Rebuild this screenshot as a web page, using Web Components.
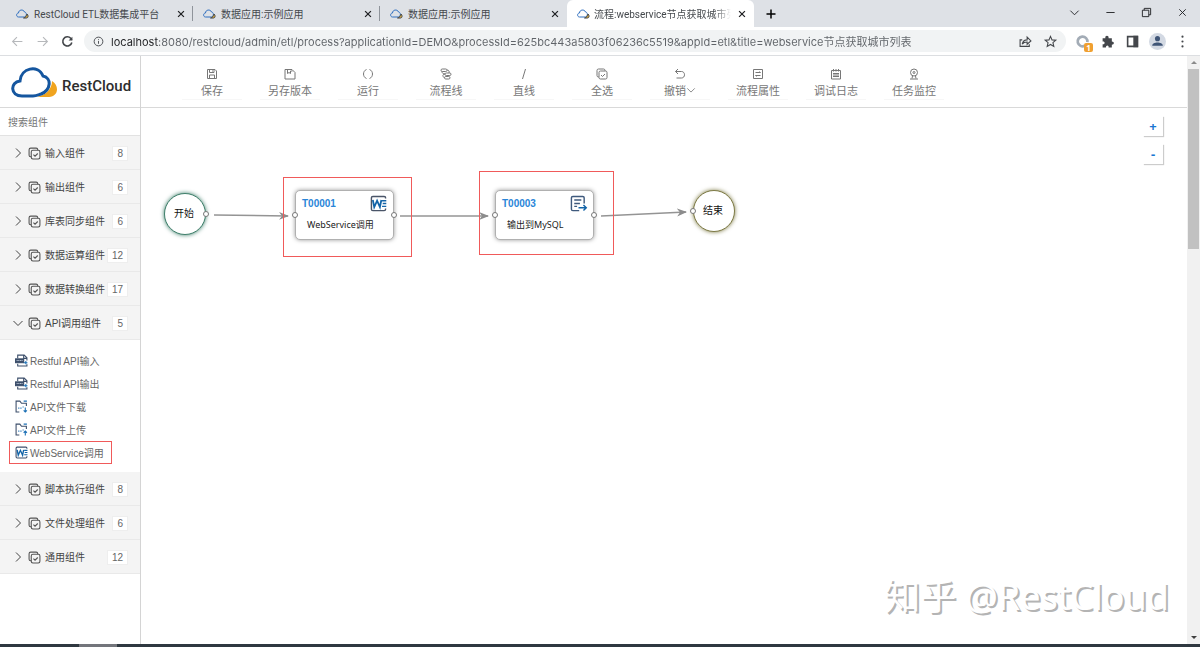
<!DOCTYPE html>
<html lang="zh-CN">
<head>
<meta charset="utf-8">
<title>流程:webservice节点获取城市列表</title>
<style>
    html, body {
        margin: 0;
        height: 100%;
    }
    body {
        font-family: "Noto Sans", "Noto Sans CJK SC", sans-serif;
        background: #fff;
        overflow: hidden;
    }
</style>
</head>
<body>
<etl-app></etl-app>

<script>
// ---------- icons ----------
const cloud = `<path d="M5 18c-5 0-5-8 0-8 0-7 10-8 12-2 5 1 5 8 0 10z" fill="none" stroke="#2f6fc0" stroke-width="2"/><path d="M15 20h6c4 0 4-6 1-8-1 4-3 7-7 8z" fill="#e0b040"/>`;
const icons = {
    cloud: cloud,
    close: `<path d="M5 5l14 14M19 5L5 19"/>`,
    plus: `<path d="M12 3v18M3 12h18"/>`,
    down: `<path d="M3 8l9 9 9-9"/>`,
    right: `<path d="M8 3l9 9-9 9"/>`,
    min: `<path d="M3 12h18"/>`,
    max: `<path d="M3 7h14v14H3zM7 7V3h14v14h-4"/>`,
    back: `<path d="M21 12H4M11 4l-8 8 8 8"/>`,
    forward: `<path d="M3 12h17M13 4l8 8-8 8"/>`,
    reload: `<path d="M20 14a8.500 8.500 0 1 1-2-8l2 3"/><path d="M21 3v7h-7z" fill="currentColor" stroke="none"/>`,
    info: `<circle cx="12" cy="12" r="9.500"/><path d="M12 11v6M12 7v2"/>`,
    share: `<path d="M6 9H2v12h17v-4M6 17c1-6 5-8 9-8V4l7 7-7 6v-4c-4 0-7 1-9 4z"/>`,
    star: `<path d="M12 2.500l2.800 6.500 7 .6-5.300 4.600 1.600 6.900L12 17.500l-6.100 3.600 1.600-6.900L2.200 9.600l7-.6z"/>`,
    puzzle: `<path d="M3 6h5c-1-6 7-6 6 0h6v6c5 0 5 6 0 6v5h-6c1-5-5-5-5 0H3v-6c5 1 5-6 0-5z" fill="currentColor" stroke="none"/>`,
    panel: `<path d="M3 3h18v18H3z"/><path d="M15 3h6v18h-6z" fill="currentColor"/>`,
    more: `<g fill="currentColor" stroke="none"><circle cx="12" cy="3" r="2"/><circle cx="12" cy="12" r="2"/><circle cx="12" cy="21" r="2"/></g>`,
    user: `<circle cx="12" cy="12" r="12" fill="#d3d9e3" stroke="none"/><g fill="#3f5577" stroke="none"><circle cx="12" cy="8" r="3.600"/><path d="M4.500 18c0-6 15-6 15 0z"/></g>`,
    ext: `<path d="M16 20a9 9 0 1 1 5-7" stroke="#a3acb6" stroke-width="5"/>`,
    save: `<path d="M3 3h15l3 3v15H3zM7 3v6h9V3M7 21v-7h10v7M13 5v2"/>`,
    saveas: `<path d="M2 3h14l6 6v13H2zM7 3v8l3-2 3 2V6h4"/>`,
    run: `<path d="M9 3c-8 3-8 15 0 18M15 3c8 3 8 15 0 18"/>`,
    flow: `<rect x="2" y="2" width="12" height="5" rx="2.500"/><rect x="10" y="10" width="12" height="5" rx="2.500"/><rect x="9" y="17" width="11" height="5" rx="2.500"/><path d="M4 7c0 4 3 5 6 5M14 4c4 0 5 3 4 6M10 12c-5 0-6 6-1 7"/>`,
    line: `<path d="M15 2L9 22"/>`,
    all: `<path d="M6 18H5a3 3 0 0 1-3-3V5a3 3 0 0 1 3-3h10a3 3 0 0 1 3 3v1"/><rect x="6" y="6" width="16" height="16" rx="3"/><path d="M10 14l3 3 5-5"/>`,
    undo: `<path d="M8 2L3 7l5 5M3 7h12c8 0 8 13 0 13H5"/>`,
    props: `<path d="M3 3h18v18H3zM7 9h10l-2-2M17 15H7l2 2"/>`,
    log: `<path d="M3 5h18v17H3zM7 2v5M12 2v5M17 2v5M6 11h12M6 14h12M6 17h12"/>`,
    monitor: `<circle cx="12" cy="9" r="7"/><circle cx="12" cy="9" r="2"/><path d="M9 16l-1 5M15 16l1 5M4 22h16"/>`,
    api: `<path d="M5 8V2h12l5 5v5M16 2v6h6M5 18v4h17v-3"/><rect x="1" y="9" width="15" height="7" fill="#3d4f6b"/><path d="M3 12h12" stroke="#b9c4d4" stroke-dasharray="2 1"/><path d="M16 16h7M20 13v6" stroke="#1a6fb5"/>`,
    apifile: `<path d="M8 22H2V2h7l3 4h9v5"/><path d="M16 2h6M6 15h2M10 15h2M14 13h2" stroke="#1a6fb5"/>`,
    word: `<path d="M22 5V4a2 2 0 0 0-2-2H4a2 2 0 0 0-2 2v16a2 2 0 0 0 2 2h16a2 2 0 0 0 2-2v-1"/><path d="M4 7l2 10 4-9 4 9 2-10" stroke="#1264a8" stroke-width="2.500"/><path d="M17 8h6M18 12h5M17 16h6" stroke="#1264a8"/>`,
    output: `<path d="M20 12V4a2 2 0 0 0-2-2H4a2 2 0 0 0-2 2v16a2 2 0 0 0 2 2h9" stroke="#3f5a7d"/><path d="M6 7h10M6 12h8M6 16h4" stroke="#3f5a7d"/><path d="M12 18h11M19 14l4 4-4 4" stroke="#1264a8"/>`
};
icons.download = icons.apifile + `<path d="M19 14v8M16 19l3 3 3-3" stroke="#1a6fb5"/>`;
icons.upload = icons.apifile + `<path d="M19 23v-8M16 18l3-3 3 3" stroke="#1a6fb5"/>`;

class UiIcon extends HTMLElement {
    constructor() {
        super();
        this.attachShadow({mode: 'open'});
    }

    connectedCallback() {
        this.shadowRoot.innerHTML = `
        <style>
            :host { display: block; flex: none; width: var(--size, 12px); height: var(--size, 12px); }
            svg { display: block; width: 100%; height: 100%; overflow: visible; }
        </style>
        <svg viewBox="0 0 24 24" fill="none" stroke="currentColor" stroke-width="${this.getAttribute('weight') || 2}" aria-hidden="true">${icons[this.getAttribute('name')]}</svg>`;
    }
}
customElements.define('ui-icon', UiIcon);

// base class: clones the markup given by each component
class Base extends HTMLElement {
    constructor() {
        super();
        this.attachShadow({mode: 'open'});
    }

    connectedCallback() {
        const template = document.createElement('template');
        template.innerHTML = `
        <style>
            * { box-sizing: border-box; }
            button, input { font: inherit; color: inherit; border: 0; padding: 0; margin: 0; background: none; outline: 0; }
            button { cursor: pointer; }
            a { color: inherit; text-decoration: none; }
        </style>` + this.render();
        this.shadowRoot.appendChild(template.content.cloneNode(true));
    }
}

// ---------- browser window ----------
class BrowserTab extends Base {
    render() {
        return `
        <style>
            :host {
                display: flex;
                align-items: center;
                position: relative;
                flex: 0 1 187px;
                min-width: 0;
                box-sizing: border-box;
                padding: 0 6px 0 10px;
                gap: 6px;
                font: 10px Roboto, "Noto Sans CJK SC", sans-serif;
                color: #45494d;
            }
            :host([active]) { background: #fff; border-radius: 6px 6px 0 0; }
            :host([line])::after {
                content: "";
                position: absolute;
                right: 0;
                top: 6px;
                height: 15px;
                border-right: 1px solid #8f949b;
            }
            .title {
                flex: 1;
                min-width: 0;
                overflow: hidden;
                white-space: nowrap;
            }
            :host([active]) { gap: 5px; }
            :host([active]) .title {
                -webkit-mask-image: linear-gradient(90deg, #000 88%, transparent);
                mask-image: linear-gradient(90deg, #000 88%, transparent);
            }
            button { display: flex; padding: 1px; --size: 10px; color: #202124; }
        </style>
        <ui-icon name="cloud"></ui-icon>
        <span class="title"><slot></slot></span>
        <button aria-label="关闭标签页"><ui-icon name="close" weight="3"></ui-icon></button>`;
    }
}
customElements.define('browser-tab', BrowserTab);

class BrowserChrome extends Base {
    render() {
        return `
        <style>
            :host { display: block; flex: none; border-bottom: 1px solid #dcdee1; }
            .strip { display: flex; height: 27px; background: #dee1e6; padding-left: 6px; }
            .new { display: flex; align-items: center; justify-content: center; width: 34px; }
            .win { display: flex; margin-left: auto; }
            .win button { display: flex; align-items: center; justify-content: center; width: 36px; height: 24px; --size: 11px; color: #202124; }
            .bar { display: flex; align-items: center; height: 28px; padding: 0 5px; color: #44474b; }
            .bar button { display: flex; align-items: center; justify-content: center; flex: none; width: 25px; height: 22px; --size: 13px; }
            .bar .dim { color: #b6b8bb; }
            .omni {
                display: flex;
                align-items: center;
                flex: 1;
                min-width: 0;
                margin: 0 4px;
                padding: 0 3px 0 2px;
                height: 22px;
                border-radius: 11px;
                background: #f1f3f4;
            }
            .omni input {
                flex: 1;
                min-width: 0;
                height: 22px;
                font: 11px Inter, "Noto Sans CJK SC", sans-serif;
                color: #5f6368;
                background: linear-gradient(90deg, #202124 48px, #5f6368 48px);
                -webkit-background-clip: text;
                background-clip: text;
                -webkit-text-fill-color: transparent;
            }
            .omni .info { --size: 11px; }
            .ext { position: relative; }
            .ext b {
                position: absolute;
                right: 2px;
                bottom: 0;
                width: 9px;
                height: 9px;
                border-radius: 2px;
                background: #f0a030;
                color: #fff;
                font-size: 8px;
                line-height: 9px;
            }
            .bar .me { --size: 17px; }
        </style>
        <div class="strip">
            <browser-tab line>RestCloud ETL数据集成平台</browser-tab>
            <browser-tab line>数据应用:示例应用</browser-tab>
            <browser-tab>数据应用:示例应用</browser-tab>
            <browser-tab active>流程:webservice节点获取城市列表</browser-tab>
            <button class="new" aria-label="新标签页"><ui-icon name="plus" weight="3"></ui-icon></button>
            <div class="win">
                <button aria-label="搜索标签页"><ui-icon name="down"></ui-icon></button>
                <button aria-label="最小化"><ui-icon name="min"></ui-icon></button>
                <button aria-label="还原"><ui-icon name="max"></ui-icon></button>
                <button aria-label="关闭"><ui-icon name="close"></ui-icon></button>
            </div>
        </div>
        <div class="bar">
            <button class="dim" aria-label="后退"><ui-icon name="back"></ui-icon></button>
            <button class="dim" aria-label="前进"><ui-icon name="forward"></ui-icon></button>
            <button aria-label="刷新"><ui-icon name="reload" weight="3"></ui-icon></button>
            <div class="omni">
                <button class="info" aria-label="网站信息"><ui-icon name="info"></ui-icon></button>
                <input type="text" aria-label="地址栏" value="localhost:8080/restcloud/admin/etl/process?applicationId=DEMO&amp;processId=625bc443a5803f06236c5519&amp;appId=etl&amp;title=webservice节点获取城市列表">
                <button aria-label="分享"><ui-icon name="share"></ui-icon></button>
                <button aria-label="收藏"><ui-icon name="star"></ui-icon></button>
            </div>
            <button class="ext" aria-label="扩展"><ui-icon name="ext"></ui-icon><b>1</b></button>
            <button aria-label="扩展程序"><ui-icon name="puzzle"></ui-icon></button>
            <button aria-label="侧边栏"><ui-icon name="panel" weight="3"></ui-icon></button>
            <button class="me" aria-label="用户"><ui-icon name="user"></ui-icon></button>
            <button aria-label="菜单"><ui-icon name="more"></ui-icon></button>
        </div>`;
    }
}
customElements.define('browser-chrome', BrowserChrome);

class PageScroll extends Base {
    render() {
        return `
        <style>
            :host { display: flex; flex-direction: column; flex: none; width: 13px; background: #f1f1f1; }
            .arrow { display: flex; align-items: center; justify-content: center; height: 13px; }
            .arrow::before { content: ""; border: 3px solid transparent; border-top: 0; border-bottom: 3px solid #8a8a8a; }
            .arrow.end::before { border-top: 3px solid #404040; border-bottom: 0; }
            .track { flex: 1; padding: 0 1px; }
            .thumb { height: 32%; background: #c1c1c1; }
        </style>
        <div class="arrow"></div>
        <div class="track"><div class="thumb"></div></div>
        <div class="arrow end"></div>`;
    }
}
customElements.define('page-scroll', PageScroll);

// ---------- sidebar ----------
class BrandLogo extends Base {
    render() {
        return `
        <style>
            :host {
                display: flex;
                align-items: center;
                gap: 4px;
                box-sizing: border-box;
                height: 52px;
                padding: 2px 0 0 11px;
                border-bottom: 1px solid #d9d9d9;
                font: 500 15px Roboto, sans-serif;
                color: #2d2d2d;
            }
            svg { flex: none; width: 47px; height: 32px; }
            span { padding-top: 7px; }
        </style>
        <svg viewBox="0 0 47 32" aria-hidden="true">
            <path d="M26 30h12c9 0 11-11 3-16 0 8-6 14-15 16z" fill="#f0a41f"/>
            <path d="M11 29C-1 29-1 15 9 14 10 1 27-3 32 9c9 2 8 14-2 18-3 1-5 2-8 2z" fill="#fff" stroke="#15569f" stroke-width="3"/>
        </svg>
        <span>RestCloud</span>`;
    }
}
customElements.define('brand-logo', BrandLogo);

class ComponentGroup extends Base {
    render() {
        const open = this.hasAttribute('open');
        return `
        <style>
            :host { display: block; }
            .head {
                display: flex;
                align-items: center;
                width: 100%;
                height: 34px;
                padding: 0 12px;
                background: #f4f4f4;
                border-bottom: 1px solid #e9e9e9;
                font: 10px "Liberation Sans", "Noto Sans CJK SC", sans-serif;
                color: #444;
                white-space: nowrap;
            }
            .all { --size: 13px; margin: 2px 4px 0 4px; color: #555; }
            .count {
                margin: 2px 0 0 auto;
                padding: 0 4px;
                border: 1px solid #eee;
                background: #fff;
                color: #666;
                line-height: 13px;
            }
            .items { display: none; padding: 9px 9px 8px; }
            :host([open]) .items { display: flex; flex-direction: column; align-items: flex-start; }
        </style>
        <button class="head" aria-expanded="${open}">
            <ui-icon name="${open ? 'down' : 'right'}"></ui-icon>
            <ui-icon class="all" name="all"></ui-icon>
            <span>${this.getAttribute('label')}</span>
            <span class="count">${this.getAttribute('count')}</span>
        </button>
        <div class="items"><slot></slot></div>`;
    }
}
customElements.define('component-group', ComponentGroup);

class ComponentItem extends Base {
    render() {
        return `
        <style>
            :host { display: block; }
            a {
                display: flex;
                align-items: center;
                gap: 2px;
                height: 23px;
                padding: 0 7px 0 5px;
                border: 1px solid transparent;
                font: 10px "Liberation Sans", "Noto Sans CJK SC", sans-serif;
                color: #666;
                white-space: nowrap;
            }
            :host([marked]) a { border-color: #f05a5a; }
            ui-icon { --size: 13px; color: #3d4f6b; }
        </style>
        <a href="#"><ui-icon name="${this.getAttribute('icon')}"></ui-icon><slot></slot></a>`;
    }
}
customElements.define('component-item', ComponentItem);

class SideBar extends Base {
    render() {
        return `
        <style>
            :host { display: block; flex: none; width: 141px; box-sizing: border-box; border-right: 1px solid #d4d4d4; }
            input {
                display: block;
                width: 100%;
                height: 28px;
                padding: 0 8px;
                font-size: 10px;
                border-bottom: 1px solid #e2e2e2;
            }
            input::placeholder { color: #757575; }
        </style>
        <brand-logo></brand-logo>
        <input type="text" placeholder="搜索组件" aria-label="搜索组件">
        <nav>
            <component-group label="输入组件" count="8"></component-group>
            <component-group label="输出组件" count="6"></component-group>
            <component-group label="库表同步组件" count="6"></component-group>
            <component-group label="数据运算组件" count="12"></component-group>
            <component-group label="数据转换组件" count="17"></component-group>
            <component-group label="API调用组件" count="5" open>
                <component-item icon="api">Restful API输入</component-item>
                <component-item icon="api">Restful API输出</component-item>
                <component-item icon="download">API文件下载</component-item>
                <component-item icon="upload">API文件上传</component-item>
                <component-item icon="word" marked>WebService调用</component-item>
            </component-group>
            <component-group label="脚本执行组件" count="8"></component-group>
            <component-group label="文件处理组件" count="6"></component-group>
            <component-group label="通用组件" count="12"></component-group>
        </nav>`;
    }
}
customElements.define('side-bar', SideBar);

// ---------- toolbar ----------
class ToolButton extends Base {
    render() {
        return `
        <style>
            :host { display: block; flex: 0 1 78px; }
            button {
                display: flex;
                flex-direction: column;
                align-items: center;
                gap: 2px;
                width: 60px;
                margin: 0 auto;
                padding: 2px 0 0;
                border-bottom: 1px solid #f7f7f7;
                font-size: 11px;
                line-height: 17px;
                color: #777;
                white-space: nowrap;
            }
            .label { display: flex; align-items: center; --size: 10px; }
        </style>
        <button>
            <ui-icon name="${this.getAttribute('icon')}"></ui-icon>
            <span class="label"><slot></slot>${this.hasAttribute('menu') ? '<ui-icon name="down"></ui-icon>' : ''}</span>
        </button>`;
    }
}
customElements.define('tool-button', ToolButton);

class FlowToolbar extends Base {
    render() {
        return `
        <style>
            :host {
                display: flex;
                align-items: center;
                box-sizing: border-box;
                height: 52px;
                padding: 2px 32px 0;
                border-bottom: 1px solid #d9d9d9;
            }
        </style>
        <tool-button icon="save">保存</tool-button>
        <tool-button icon="saveas">另存版本</tool-button>
        <tool-button icon="run">运行</tool-button>
        <tool-button icon="flow">流程线</tool-button>
        <tool-button icon="line">直线</tool-button>
        <tool-button icon="all">全选</tool-button>
        <tool-button icon="undo" menu>撤销</tool-button>
        <tool-button icon="props">流程属性</tool-button>
        <tool-button icon="log">调试日志</tool-button>
        <tool-button icon="monitor">任务监控</tool-button>`;
    }
}
customElements.define('flow-toolbar', FlowToolbar);

// ---------- canvas ----------
const portStyle = `
    .port {
        position: absolute;
        top: calc(50% - 3px);
        width: 6px;
        height: 6px;
        border: 1px solid #777;
        border-radius: 50%;
        background: #fff;
    }
    .in { left: -4px; }
    .out { right: -4px; }`;

class FlowNode extends Base {
    render() {
        return `
        <style>
            :host {
                position: absolute;
                display: block;
                box-sizing: border-box;
                width: 99px;
                height: 50px;
                padding: 4px 6px 0;
                border: 1px solid #b0b0b0;
                border-radius: 5px;
                background: #fff;
                box-shadow: 0 0 4px #999;
            }
            .top { display: flex; align-items: center; justify-content: space-between; --size: 17px; color: #4a5568; }
            .id { font: 700 10px "Liberation Sans", sans-serif; color: #2a86d8; }
            .name { padding: 6px 0 0 5px; font-size: 9px; line-height: 14px; color: #222; white-space: nowrap; }
            ${portStyle}
        </style>
        <div class="top"><span class="id">${this.getAttribute('node-id')}</span><ui-icon name="${this.getAttribute('icon')}"></ui-icon></div>
        <div class="name"><slot></slot></div>
        <i class="port in"></i><i class="port out"></i>`;
    }
}
customElements.define('flow-node', FlowNode);

class FlowTerminal extends Base {
    render() {
        return `
        <style>
            :host {
                position: absolute;
                display: flex;
                align-items: center;
                justify-content: center;
                box-sizing: border-box;
                width: 42px;
                height: 42px;
                padding: 0 2px 4px 0;
                border: 1px solid var(--ring);
                border-radius: 50%;
                background: #fff;
                box-shadow: 0 0 4px var(--ring);
                font-size: 10px;
                color: #111;
            }
            ${portStyle}
        </style>
        <slot></slot>
        <i class="port ${this.getAttribute('port')}"></i>`;
    }
}
customElements.define('flow-terminal', FlowTerminal);

class FlowCanvas extends Base {
    render() {
        return `
        <style>
            :host { display: block; position: relative; flex: 1; overflow: hidden; }
            .links { position: absolute; left: 0; top: 0; width: 620px; height: 180px; }
            .start { left: 23px; top: 85px; --ring: #3f7f6b; }
            .call { left: 154px; top: 82px; }
            .mysql { left: 354px; top: 82px; }
            .end { left: 552px; top: 82px; --ring: #7d7a45; }
            .mark { position: absolute; border: 1px solid #f05a5a; }
            .mark.a { left: 142px; top: 69px; width: 129px; height: 80px; }
            .mark.b { left: 338px; top: 63px; width: 135px; height: 84px; }
            .zoom { position: absolute; right: 24px; top: 8px; display: flex; flex-direction: column; gap: 8px; }
            .zoom button {
                width: 20px;
                height: 20px;
                background: #fff;
                box-shadow: 1px 1px 1px #ccc;
                color: #1976d2;
                font: 700 13px/18px "Noto Sans", sans-serif;
            }
            .sign {
                position: absolute;
                right: 18px;
                bottom: 22px;
                font-size: 36px;
                line-height: 50px;
                color: #fff;
                text-shadow: 2px 2px 0 #b4b4b4;
                white-space: nowrap;
            }
        </style>
        <svg class="links" viewBox="0 0 620 180" aria-hidden="true">
            <defs>
                <marker id="arrow" viewBox="0 0 10 10" refX="9" refY="5" markerWidth="10" markerHeight="10" markerUnits="userSpaceOnUse" orient="auto"><path d="M0 1l10 4-10 4 3-4z" fill="#8c8c8c"/></marker>
            </defs>
            <g stroke="#949494" stroke-width="1.500">
                <line x1="73" y1="107" x2="147" y2="108" marker-end="url(#arrow)"/>
                <line x1="259" y1="108" x2="347" y2="108" marker-end="url(#arrow)"/>
                <line x1="460" y1="108" x2="545" y2="104" marker-end="url(#arrow)"/>
            </g>
        </svg>
        <flow-terminal class="start" port="out">开始</flow-terminal>
        <flow-node class="call" node-id="T00001" icon="word">WebService调用</flow-node>
        <flow-node class="mysql" node-id="T00003" icon="output">输出到MySQL</flow-node>
        <flow-terminal class="end" port="in">结束</flow-terminal>
        <div class="mark a"></div>
        <div class="mark b"></div>
        <div class="zoom"><button>+</button><button>-</button></div>
        <div class="sign">知乎 @RestCloud</div>`;
    }
}
customElements.define('flow-canvas', FlowCanvas);

class EtlApp extends Base {
    render() {
        return `
        <style>
            :host { display: flex; flex-direction: column; height: 100vh; }
            .page { display: flex; flex: 1; min-height: 0; }
            main { display: flex; flex-direction: column; flex: 1; min-width: 0; }
            footer { flex: none; height: 3px; padding-left: 79px; background: #2f3840; }
            footer i { display: block; width: 38px; height: 3px; background: #73757b; }
        </style>
        <browser-chrome></browser-chrome>
        <div class="page">
            <side-bar></side-bar>
            <main>
                <flow-toolbar></flow-toolbar>
                <flow-canvas></flow-canvas>
            </main>
            <page-scroll></page-scroll>
        </div>
        <footer><i></i></footer>`;
    }
}
customElements.define('etl-app', EtlApp);
</script>
</body>
</html>
